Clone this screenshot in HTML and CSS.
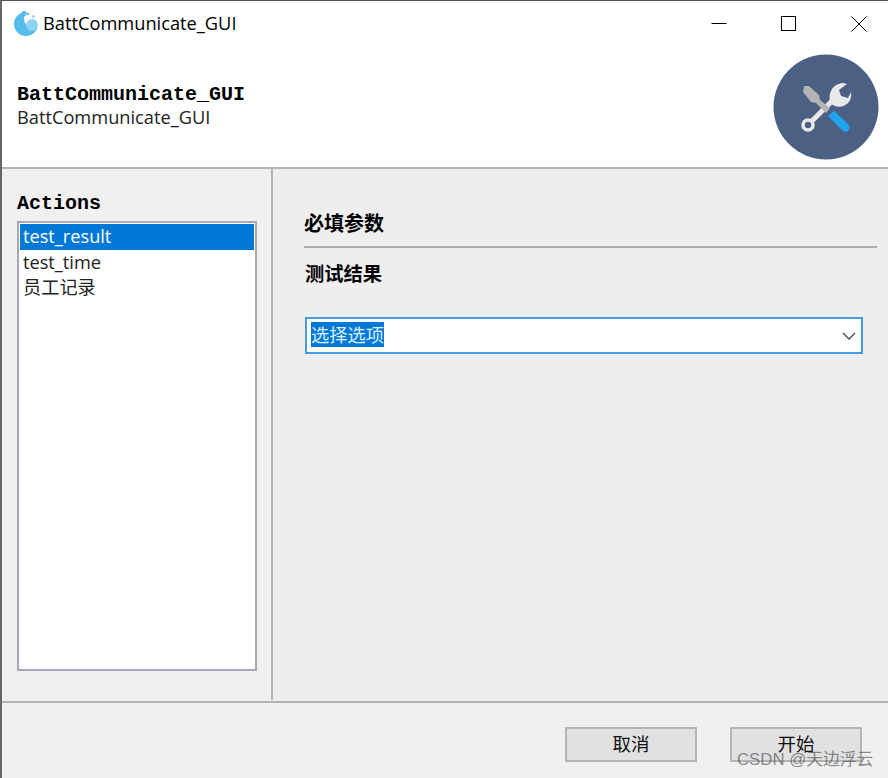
FILE: index.html
```html
<!DOCTYPE html>
<html lang="zh">
<head>
<meta charset="utf-8">
<title>BattCommunicate_GUI</title>
<link rel="stylesheet" href="styles.css">
</head>
<body>
<div class="window">
  <div class="titlebar">
    <svg class="app-logo" width="25" height="25" viewBox="0 0 25 25">
      <circle cx="12" cy="13" r="12" fill="#55bdec"/>
      <circle cx="19" cy="8" r="9" fill="#fff"/>
      <circle cx="18" cy="14" r="6" fill="#8fd2f2"/>
      <circle cx="10" cy="2.500" r="2.500" fill="#55bdec"/>
      <circle cx="19.500" cy="5.500" r="1.500" fill="#8fd2f2"/>
      <circle cx="14" cy="3" r="1.200" fill="#55bdec"/>
    </svg>
    <span class="title-text">BattCommunicate_GUI</span>
    <div class="controls">
      <svg class="ctl" width="16" height="16" viewBox="0 0 16 16"><path d="M0.500 7.500H15.500" stroke="#000" fill="none"/></svg>
      <svg class="ctl" width="16" height="16" viewBox="0 0 16 16"><rect x="0.500" y="0.500" width="14" height="14" stroke="#000" fill="none"/></svg>
      <svg class="ctl" width="16" height="16" viewBox="0 0 16 16"><path d="M0.500 0.500L15.500 15.500M15.500 0.500L0.500 15.500" stroke="#000" fill="none"/></svg>
    </div>
  </div>
  <header class="header">
    <div class="header-text">
      <div class="mono-bold">BattCommunicate_GUI</div>
      <div class="subtitle">BattCommunicate_GUI</div>
    </div>
    <svg class="badge" width="106" height="106" viewBox="0 0 106 106">
      <circle cx="53" cy="53" r="52.500" fill="#4c6083"/>
      <path d="M35 71L60 46" stroke="#e8e8e8" stroke-width="5" fill="none"/>
      <circle cx="35" cy="71" r="5" fill="#4c6083" stroke="#e8e8e8" stroke-width="3.500"/>
      <path d="M58 50C54 40 59 30 70 29L74 30L66 36L68 42L75 44L78 38C80 48 71 55 62 52Z" fill="#e8e8e8"/>
      <path d="M31 32L36 32L46 41L47 46L57 54L53 59L43 49L38 48L30 38Z" fill="#b4b4b4"/>
      <path d="M61 57L75 70Q78 74 75 77Q71 79 68 75L55 62Z" fill="#1fa5ef"/>
    </svg>
  </header>
  <main class="body">
    <aside class="side">
      <div class="mono-bold side-title">Actions</div>
      <ul class="listbox">
        <li class="item selected">test_result</li>
        <li class="item">test_time</li>
        <li class="item">员工记录</li>
      </ul>
    </aside>
    <section class="content">
      <div class="section-title">必填参数</div>
      <div class="rule"></div>
      <div class="field-label">测试结果</div>
      <div class="select">
        <span class="select-value">选择选项</span>
        <svg class="chevron" width="14" height="8" viewBox="0 0 14 8"><path d="M1 1L7 7L13 1" stroke="#555" stroke-width="1.500" fill="none"/></svg>
      </div>
    </section>
  </main>
  <footer class="footer">
    <button class="btn">取消</button>
    <button class="btn">开始</button>
  </footer>
  <div class="watermark">CSDN @天边浮云</div>
</div>
</body>
</html>
```
FILE: styles.css
```css
* { box-sizing: border-box; }
html, body { margin: 0; padding: 0; }
body {
  width: 888px;
  height: 778px;
  overflow: hidden;
  font-family: "Open Sans", "Noto Sans CJK SC", sans-serif;
  color: #000;
}
.window {
  position: relative;
  width: 888px;
  height: 778px;
  display: flex;
  flex-direction: column;
  border-top: 1px solid #555;
  border-left: 2px solid #666;
  background: #f0f0f0;
}
.titlebar {
  height: 45px;
  flex: none;
  background: #fff;
  display: flex;
  align-items: center;
  padding-left: 12px;
}
.app-logo { flex: none; margin-top: -1px; }
.title-text {
  margin-left: 4px;
  margin-top: -2px;
  font-size: 18.250px;
  line-height: 24px;
}
.controls {
  margin-left: auto;
  display: flex;
  gap: 54px;
  padding-right: 21px;
  margin-top: 0;
}
.header {
  height: 123px;
  flex: none;
  background: #fff;
  display: flex;
  justify-content: space-between;
  padding: 8px 9px 0 15px;
  border-bottom: 2px solid #b4b4b4;
}
.header-text { padding-top: 29px; }
.mono-bold {
  font-family: "Liberation Mono", monospace;
  font-weight: 700;
  font-size: 20px;
  line-height: 24px;
}
.subtitle {
  margin-top: -2px;
  font-size: 18.240px;
  line-height: 24px;
  color: #222;
}
.badge { flex: none; }
.body {
  height: 534px;
  flex: none;
  display: flex;
  border-bottom: 2px solid #b4b4b4;
}
.side {
  width: 271px;
  flex: none;
  height: 531px;
  padding: 23px 15px 0 15px;
  border-right: 2px solid #b4b4b4;
}
.side-title { line-height: 24px; margin-bottom: 5px; }
.listbox {
  list-style: none;
  margin: 0;
  width: 240px;
  height: 450px;
  padding: 1px;
  background: #fff;
  border: 2px solid #a6a9b5;
}
.item {
  height: 25.500px;
  line-height: 25px;
  padding-left: 3px;
  font-size: 18.200px;
  color: #222;
}
.item.selected { background: #0078d7; color: #fff; }
.content {
  flex: 1;
  padding: 39px 11px 0 31px;
  background: #eee;
}
.section-title {
  font-family: "Noto Sans CJK SC", sans-serif;
  font-weight: 700;
  font-size: 20px;
  line-height: 30px;
}
.rule {
  height: 2px;
  margin-top: 8px;
  background: #adadad;
}
.field-label {
  font-family: "Noto Sans CJK SC", sans-serif;
  font-weight: 700;
  font-size: 19.250px;
  line-height: 28px;
  margin-top: 11px;
  margin-left: 1px;
}
.select {
  margin: 30px 14px 0 1px;
  height: 37px;
  background: #fff;
  border: 2px solid #4a9be0;
  display: flex;
  align-items: center;
  justify-content: space-between;
  padding: 0 5px 0 4px;
}
.select-value {
  display: inline-block;
  height: 25px;
  margin-bottom: 3px;
  font-family: "Noto Sans CJK SC", sans-serif;
  font-size: 18.250px;
  line-height: 25px;
  background: #0078d7;
  color: #dcefff;
}
.footer {
  flex: 1;
  display: flex;
  justify-content: flex-end;
  align-items: flex-start;
  gap: 33px;
  padding: 24px 26px 0 0;
}
.btn {
  width: 132px;
  height: 35px;
  padding: 0 0 4px;
  background: #e1e1e1;
  border: 2px solid #b4b4b4;
  color: #111;
  font-family: "Noto Sans CJK SC", sans-serif;
  font-size: 18.500px;
  line-height: 26px;
}
.watermark {
  position: absolute;
  left: 735px;
  top: 748px;
  font-family: "Liberation Sans", "Noto Sans CJK SC", sans-serif;
  font-size: 16.800px;
  line-height: 22px;
  color: rgba(70, 70, 70, 0.62);
  white-space: nowrap;
}
```
